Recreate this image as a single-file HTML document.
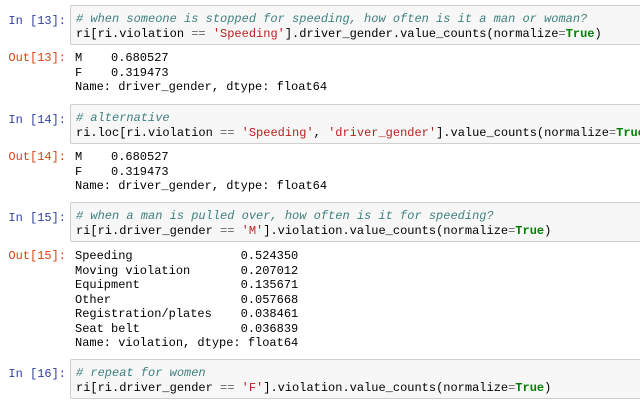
<!DOCTYPE html>
<html><head><style>
body{margin:0;width:640px;height:407px;overflow:hidden;background:#fff;font-family:"Liberation Mono",monospace;font-size:12px;}
.p{position:absolute;width:66px;text-align:right;line-height:14.5px;}
.in{color:#303f9f}.out{color:#d84315}
.box{position:absolute;left:70px;width:600px;background:#f7f7f7;border:1px solid #cfcfcf;border-radius:2px;padding:6px 5px 4px 5px;box-sizing:border-box;}
pre{margin:0;font-family:inherit;font-size:12px;line-height:14.5px;white-space:pre;color:#000}
.o{position:absolute;left:75px;}
.c{color:#408080;font-style:italic}.s{color:#ba2121}.k{color:#008000;font-weight:bold}.op{color:#666}
</style></head><body>
<div class="p in" style="top:14px">In [13]:</div>
<div class="box" style="top:5px;height:40px"><pre><span class="c"># when someone is stopped for speeding, how often is it a man or woman?</span>
ri[ri.violation <span class="op">==</span> <span class="s">'Speeding'</span>].driver_gender.value_counts(normalize<span class="op">=</span><span class="k">True</span>)</pre></div>
<div class="p out" style="top:51px">Out[13]:</div>
<pre class="o" style="top:51px">M    0.680527
F    0.319473
Name: driver_gender, dtype: float64</pre>

<div class="p in" style="top:113px">In [14]:</div>
<div class="box" style="top:104px;height:40px"><pre><span class="c"># alternative</span>
ri.loc[ri.violation <span class="op">==</span> <span class="s">'Speeding'</span>, <span class="s">'driver_gender'</span>].value_counts(normalize<span class="op">=</span><span class="k">True</span>)</pre></div>
<div class="p out" style="top:150px">Out[14]:</div>
<pre class="o" style="top:150px">M    0.680527
F    0.319473
Name: driver_gender, dtype: float64</pre>

<div class="p in" style="top:211px">In [15]:</div>
<div class="box" style="top:202px;height:40px"><pre><span class="c"># when a man is pulled over, how often is it for speeding?</span>
ri[ri.driver_gender <span class="op">==</span> <span class="s">'M'</span>].violation.value_counts(normalize<span class="op">=</span><span class="k">True</span>)</pre></div>
<div class="p out" style="top:249px">Out[15]:</div>
<pre class="o" style="top:249px">Speeding               0.524350
Moving violation       0.207012
Equipment              0.135671
Other                  0.057668
Registration/plates    0.038461
Seat belt              0.036839
Name: violation, dtype: float64</pre>

<div class="p in" style="top:367px">In [16]:</div>
<div class="box" style="top:359px;height:40px"><pre><span class="c"># repeat for women</span>
ri[ri.driver_gender <span class="op">==</span> <span class="s">'F'</span>].violation.value_counts(normalize<span class="op">=</span><span class="k">True</span>)</pre></div>
</body></html>
